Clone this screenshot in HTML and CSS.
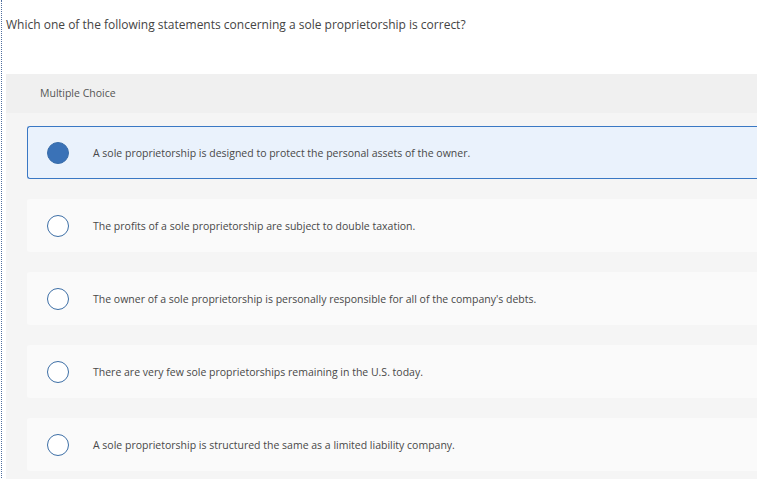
FILE: index.html
```html
<!DOCTYPE html>
<html lang="en">
<head>
<meta charset="utf-8">
<title>Multiple Choice</title>
<link rel="stylesheet" href="styles.css">
</head>
<body>
<div class="page">
  <p class="question">Which one of the following statements concerning a sole proprietorship is correct?</p>
  <section class="panel">
    <div class="panel-header">Multiple Choice</div>
    <div class="options">
      <div class="option selected"><span class="radio"></span><span class="label">A sole proprietorship is designed to protect the personal assets of the owner.</span></div>
      <div class="option"><span class="radio"></span><span class="label">The profits of a sole proprietorship are subject to double taxation.</span></div>
      <div class="option"><span class="radio"></span><span class="label">The owner of a sole proprietorship is personally responsible for all of the company's debts.</span></div>
      <div class="option"><span class="radio"></span><span class="label">There are very few sole proprietorships remaining in the U.S. today.</span></div>
      <div class="option"><span class="radio"></span><span class="label">A sole proprietorship is structured the same as a limited liability company.</span></div>
    </div>
  </section>
</div>
</body>
</html>
```
FILE: styles.css
```css
html, body {
  margin: 0;
  padding: 0;
  background: #ffffff;
}
body {
  font-family: "Open Sans", "Liberation Sans", sans-serif;
  color: #444444;
}
.page {
  margin-left: 1px;
  border-left: 1px dotted #4f6f9f;
  min-height: 479px;
  box-sizing: border-box;
  padding-left: 4px;
}
.question {
  margin: 0;
  padding-top: 17px;
  font-size: 12px;
  line-height: 16px;
  color: #444444;
  height: 57px;
}
.panel {
  background: #f5f5f5;
  margin-left: 0;
  padding-bottom: 9px;
}
.panel-header {
  background: #f0f0f0;
  height: 39px;
  line-height: 39px;
  padding-left: 34px;
  font-size: 10.5px;
  color: #555555;
}
.options {
  display: flex;
  flex-direction: column;
  gap: 20px;
  padding: 13px 0 0 21px;
}
.option {
  display: flex;
  align-items: center;
  height: 53px;
  box-sizing: border-box;
  background: #fafafa;
  border-radius: 3px 0 0 3px;
  padding-left: 20px;
  font-size: 10.5px;
  color: #484848;
}
.option.selected {
  background: #eaf2fc;
  border: 1px solid #3a78c4;
  border-right: none;
  padding-left: 19px;
}
.radio {
  width: 22px;
  height: 22px;
  box-sizing: border-box;
  border-radius: 50%;
  border: 1.5px solid #3d6fa6;
  background: #ffffff;
  flex: none;
  margin-right: 24px;
}
.selected .radio {
  background: #3a72b7;
  border-color: #3a6ea9;
}
```
